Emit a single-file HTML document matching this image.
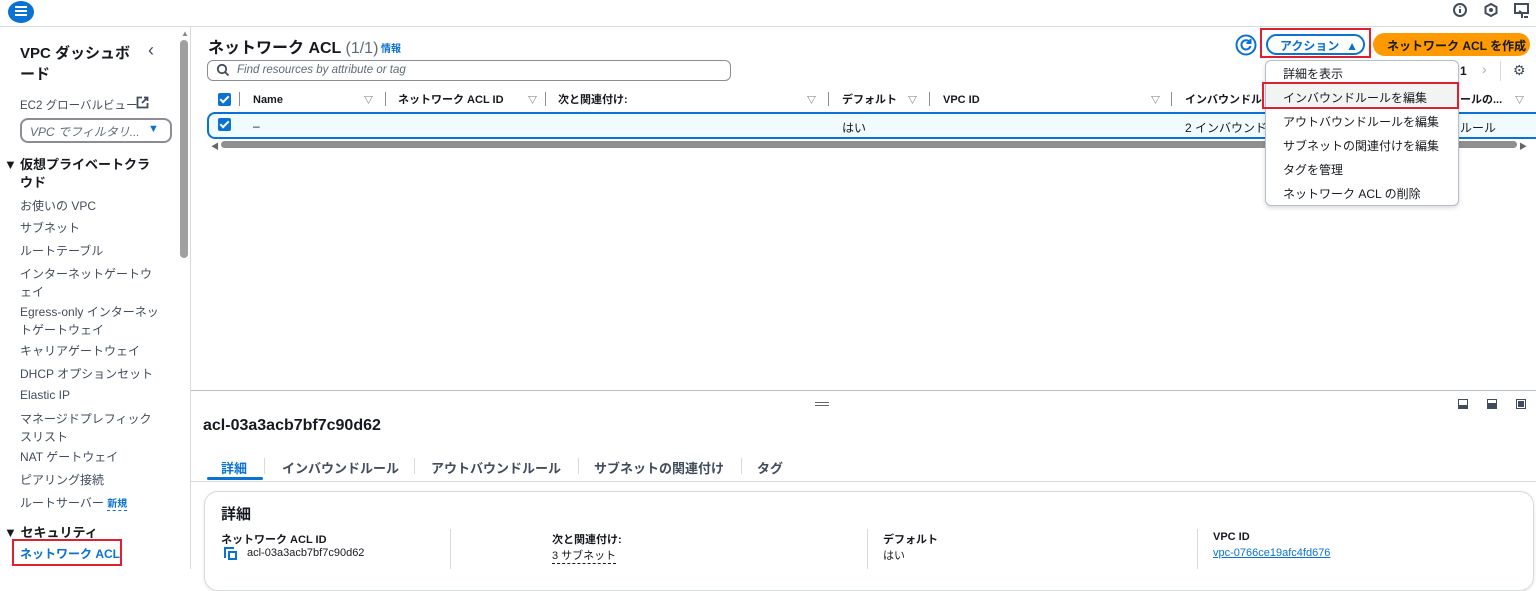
<!DOCTYPE html>
<html><head><meta charset="utf-8"><style>
*{margin:0;padding:0;box-sizing:border-box}
body{width:1536px;height:569px;overflow:hidden;background:#fff;font-family:"Liberation Sans","Noto Sans CJK JP",sans-serif;color:#16191f;position:relative;font-size:12px}
.a{position:absolute;white-space:nowrap}
.nav{color:#414d5c;font-size:12px}
.b{font-weight:bold}
.h{line-height:14px;top:93px!important}
.cb{position:absolute;width:13px;height:13px;background:#0972d3;border-radius:2px}
.cb:after{content:"";position:absolute;left:4px;top:1px;width:3px;height:7px;border:solid #fff;border-width:0 2px 2px 0;transform:rotate(45deg)}
.tri{position:absolute;font-size:9px;color:#414d5c;line-height:14px;top:93px}
.sep{position:absolute;width:1px;height:14px;background:#8c8c94}
.mi{position:absolute;left:1283px;font-size:12px;color:#16191f}
</style></head><body>
<!-- top bar -->
<div class="a" style="left:8px;top:1px;width:26px;height:22px;border-radius:50%;background:#0972d3"></div>
<div class="a" style="left:15px;top:6px;width:12px;height:2px;background:#fff;box-shadow:0 4px 0 #fff,0 8px 0 #fff"></div>
<svg class="a" style="left:1452px;top:2px" width="16" height="16" viewBox="0 0 16 16"><circle cx="8" cy="8" r="6" fill="none" stroke="#414d5c" stroke-width="2"/><path d="M8 7v4M8 4.5v1" stroke="#414d5c" stroke-width="2"/></svg>
<svg class="a" style="left:1483px;top:2px" width="16" height="16" viewBox="0 0 16 16"><path d="M8 2l5.5 3v6L8 14l-5.5-3V5z" fill="none" stroke="#414d5c" stroke-width="2"/><circle cx="8" cy="8" r="2" fill="#414d5c"/></svg>
<svg class="a" style="left:1513px;top:2px" width="18" height="18" viewBox="0 0 18 18"><rect x="2" y="2" width="13" height="9" fill="none" stroke="#414d5c" stroke-width="2"/><path d="M6 9l3 2v5M11 15h4" stroke="#414d5c" stroke-width="2" fill="none"/></svg>
<div class="a" style="left:0;top:26px;width:1536px;height:1px;background:#d5dbdb"></div>
<!-- sidebar -->
<div class="a" style="left:190px;top:27px;width:1px;height:542px;background:#d5dbdb"></div>
<div class="a" style="left:180px;top:40px;width:8px;height:218px;border-radius:4px;background:#a0a0a0"></div>
<div class="a" style="left:181px;top:29px;font-size:8px;color:#888">▲</div>
<div class="a b" style="left:20px;top:43px;font-size:15px;line-height:21px;white-space:normal;width:120px">VPC ダッシュボード</div>
<div class="a" style="left:148px;top:40px;font-size:18px;color:#414d5c">‹</div>
<div class="a nav" style="left:20px;top:97px;font-size:11.5px">EC2 グローバルビュー</div>
<svg class="a" style="left:136px;top:96px" width="13" height="13" viewBox="0 0 13 13"><path d="M6 1.5H1.5v10h10V7M8 1.5h3.5V5M11.5 1.5L6 7" fill="none" stroke="#414d5c" stroke-width="1.8"/></svg>
<div class="a" style="left:20px;top:118px;width:152px;height:25px;border:2px solid #8c8c94;border-radius:8px"></div>
<div class="a" style="left:30px;top:123px;font-style:italic;color:#5f6b7a">VPC でフィルタリ...</div>
<div class="a" style="left:148px;top:123px;color:#0972d3;font-size:11px">▼</div>
<div class="a b" style="left:4px;top:157px;font-size:13px">▼</div>
<div class="a b" style="left:20px;top:156px;font-size:13px;line-height:18px;white-space:normal;width:135px">仮想プライベートクラウド</div>
<div class="a nav" style="left:20px;top:197px">お使いの VPC</div>
<div class="a nav" style="left:20px;top:219px">サブネット</div>
<div class="a nav" style="left:20px;top:242px">ルートテーブル</div>
<div class="a nav" style="left:20px;top:265px;line-height:18px;white-space:normal;width:140px">インターネットゲートウェイ</div>
<div class="a nav" style="left:20px;top:303px;line-height:18px;white-space:normal;width:140px">Egress-only インターネットゲートウェイ</div>
<div class="a nav" style="left:20px;top:342px">キャリアゲートウェイ</div>
<div class="a nav" style="left:20px;top:365px">DHCP オプションセット</div>
<div class="a nav" style="left:20px;top:388px">Elastic IP</div>
<div class="a nav" style="left:20px;top:410px;line-height:18px;white-space:normal;width:140px">マネージドプレフィックスリスト</div>
<div class="a nav" style="left:20px;top:448px">NAT ゲートウェイ</div>
<div class="a nav" style="left:20px;top:471px">ピアリング接続</div>
<div class="a nav" style="left:20px;top:494px">ルートサーバー <span style="color:#0972d3;font-size:10px;font-weight:bold;border-bottom:1px dashed #0972d3">新規</span></div>
<div class="a b" style="left:4px;top:522px;font-size:13px">▼ セキュリティ</div>
<div class="a" style="left:12px;top:539px;width:110px;height:27px;border:2px solid #e0202e"></div>
<div class="a b" style="left:20px;top:545px;color:#0972d3">ネットワーク ACL</div>
<!-- header -->
<div class="a b" style="left:208px;top:34px;font-size:16px">ネットワーク ACL <span style="font-weight:normal;color:#5f6b7a">(1/1)</span></div>
<div class="a b" style="left:381px;top:40px;font-size:10px;color:#0972d3">情報</div>
<div class="a" style="left:207px;top:60px;width:524px;height:21px;border:1.5px solid #8c8c94;border-radius:6px"></div>
<svg class="a" style="left:216px;top:63px" width="14" height="14" viewBox="0 0 14 14"><circle cx="6" cy="6" r="4.2" fill="none" stroke="#414d5c" stroke-width="1.8"/><path d="M9 9l3.5 3.5" stroke="#414d5c" stroke-width="1.8"/></svg>
<div class="a" style="left:237px;top:64px;font-style:italic;color:#5f6b7a;font-size:11.5px">Find resources by attribute or tag</div>
<svg class="a" style="left:1235px;top:34px" width="22" height="22" viewBox="0 0 22 22"><circle cx="11" cy="11" r="9.5" fill="none" stroke="#0972d3" stroke-width="2"/><path d="M15 8.5A4.6 4.6 0 1 0 15.5 12" fill="none" stroke="#0972d3" stroke-width="2"/><path d="M15.5 5v4h-4" fill="none" stroke="#0972d3" stroke-width="2"/></svg>
<div class="a" style="left:1260px;top:28px;width:111px;height:30px;border:2px solid #e0202e"></div>
<div class="a" style="left:1266px;top:34px;width:99px;height:21px;border:2px solid #0972d3;border-radius:12px"></div>
<div class="a b" style="left:1280px;top:37px;color:#0972d3">アクション &nbsp;▲</div>
<div class="a" style="left:1373px;top:33px;width:157px;height:23px;background:#ff9900;border-radius:12px"></div>
<div class="a b" style="left:1387px;top:37px;color:#16191f">ネットワーク ACL を作成</div>
<div class="a b" style="left:1460px;top:64px;font-size:12px">1</div>
<div class="a" style="left:1482px;top:61px;color:#aab;font-size:14px">›</div>
<div class="a" style="left:1500px;top:61px;width:1px;height:20px;background:#d5dbdb"></div>
<div class="a" style="left:1513px;top:62px;font-size:14px;color:#414d5c">⚙</div>
<!-- table -->
<div class="cb" style="left:218px;top:93px"></div>
<div class="sep" style="left:239px;top:92px"></div>
<div class="a b h" style="left:253px;font-size:11px">Name</div>
<div class="tri" style="left:364px">▽</div><div class="sep" style="left:385px;top:92px"></div>
<div class="a b h" style="left:398px;font-size:11px">ネットワーク ACL ID</div>
<div class="tri" style="left:528px">▽</div><div class="sep" style="left:545px;top:92px"></div>
<div class="a b h" style="left:558px;font-size:11px">次と関連付け:</div>
<div class="tri" style="left:807px">▽</div><div class="sep" style="left:828px;top:92px"></div>
<div class="a b h" style="left:842px;font-size:11px">デフォルト</div>
<div class="tri" style="left:908px">▽</div><div class="sep" style="left:929px;top:92px"></div>
<div class="a b h" style="left:943px;font-size:11px">VPC ID</div>
<div class="tri" style="left:1151px">▽</div><div class="sep" style="left:1171px;top:92px"></div>
<div class="a b h" style="left:1185px;font-size:11px">インバウンドル</div>
<div class="a b h" style="left:1460px;font-size:11px">ールの...</div>
<div class="tri" style="left:1515px">▽</div>
<div class="a" style="left:207px;top:112px;width:1329px;height:27px;background:#f0fbff;border:2px solid #0972d3;border-right:none;border-radius:8px 0 0 8px"></div>
<div class="cb" style="left:218px;top:118px"></div>
<div class="a" style="left:253px;top:119px">–</div>
<div class="a" style="left:842px;top:119px">はい</div>
<div class="a" style="left:1185px;top:119px">2 インバウンド</div>
<div class="a" style="left:1460px;top:119px">ルール</div>
<div class="a" style="left:211px;top:141px;font-size:8px;color:#666">◀</div>
<div class="a" style="left:221px;top:141px;width:1296px;height:7px;background:#8f8f8f;border-radius:4px"></div>
<div class="a" style="left:1519px;top:141px;font-size:8px;color:#666">▶</div>
<!-- dropdown -->
<div class="a" style="left:1265px;top:60px;width:194px;height:146px;background:#fff;border:1px solid #b6bec9;border-radius:6px;box-shadow:0 2px 4px rgba(0,0,0,.15)"></div>
<div class="a" style="left:1266px;top:84px;width:192px;height:22px;background:#f2f3f3"></div>
<div class="a" style="left:1262px;top:82px;width:197px;height:27px;border:2px solid #e0202e"></div>
<div class="mi" style="top:65px">詳細を表示</div>
<div class="mi" style="top:89px">インバウンドルールを編集</div>
<div class="mi" style="top:113px">アウトバウンドルールを編集</div>
<div class="mi" style="top:137px">サブネットの関連付けを編集</div>
<div class="mi" style="top:161px">タグを管理</div>
<div class="mi" style="top:185px">ネットワーク ACL の削除</div>
<!-- split -->
<div class="a" style="left:191px;top:390px;width:1345px;height:1px;background:#b6bec9"></div>
<div class="a" style="left:815px;top:402px;width:14px;height:1px;background:#666;box-shadow:0 3px 0 #666"></div>
<div class="a" style="left:1458px;top:399px;width:10px;height:10px;border:1.5px solid #414d5c;border-bottom-width:4px"></div>
<div class="a" style="left:1487px;top:399px;width:10px;height:10px;border:1.5px solid #414d5c;border-width:1.5px 1.5px 6px"></div>
<div class="a" style="left:1516px;top:399px;width:10px;height:10px;border:1.5px solid #414d5c;background:#414d5c;box-shadow:inset 0 0 0 1px #fff"></div>
<div class="a" style="left:203px;top:417px;font-size:16px;font-weight:bold">acl-03a3acb7bf7c90d62</div>
<div class="a b" style="left:221px;top:458px;font-size:13px;color:#0972d3">詳細</div>
<div class="a" style="left:207px;top:477px;width:56px;height:3px;background:#0972d3;border-radius:2px"></div>
<div class="a" style="left:264px;top:458px;width:1px;height:16px;background:#d5dbdb"></div>
<div class="a b" style="left:282px;top:458px;font-size:13px;color:#414d5c">インバウンドルール</div>
<div class="a" style="left:414px;top:458px;width:1px;height:16px;background:#d5dbdb"></div>
<div class="a b" style="left:431px;top:458px;font-size:13px;color:#414d5c">アウトバウンドルール</div>
<div class="a" style="left:578px;top:458px;width:1px;height:16px;background:#d5dbdb"></div>
<div class="a b" style="left:594px;top:458px;font-size:13px;color:#414d5c">サブネットの関連付け</div>
<div class="a" style="left:741px;top:458px;width:1px;height:16px;background:#d5dbdb"></div>
<div class="a b" style="left:757px;top:458px;font-size:13px;color:#414d5c">タグ</div>
<div class="a" style="left:191px;top:481px;width:1345px;height:1px;background:#d5dbdb"></div>
<div class="a" style="left:204px;top:491px;width:1330px;height:100px;border:1px solid #d5dbdb;border-radius:14px;box-shadow:0 1px 3px rgba(0,0,0,.1)"></div>
<div class="a b" style="left:221px;top:503px;font-size:15px">詳細</div>
<div class="a b" style="left:221px;top:531px;font-size:11px">ネットワーク ACL ID</div>
<div class="a" style="left:224px;top:547px;width:10px;height:11px;border:2px solid #0972d3;border-right:none;border-bottom:none"></div>
<div class="a" style="left:228px;top:551px;width:9px;height:9px;border:2px solid #0972d3"></div>
<div class="a" style="left:247px;top:547px;font-size:11px">acl-03a3acb7bf7c90d62</div>
<div class="a" style="left:450px;top:529px;width:1px;height:40px;background:#d5dbdb"></div>
<div class="a b" style="left:552px;top:531px;font-size:11px">次と関連付け:</div>
<div class="a" style="left:552px;top:547px;font-size:11px;border-bottom:1px dashed #16191f">3 サブネット</div>
<div class="a" style="left:867px;top:529px;width:1px;height:40px;background:#d5dbdb"></div>
<div class="a b" style="left:883px;top:531px;font-size:11px">デフォルト</div>
<div class="a" style="left:883px;top:547px;font-size:11px">はい</div>
<div class="a" style="left:1197px;top:529px;width:1px;height:40px;background:#d5dbdb"></div>
<div class="a b" style="left:1213px;top:531px;font-size:11px">VPC ID</div>
<div class="a" style="left:1213px;top:547px;font-size:11px;color:#0972d3;text-decoration:underline">vpc-0766ce19afc4fd676</div>
</body></html>
